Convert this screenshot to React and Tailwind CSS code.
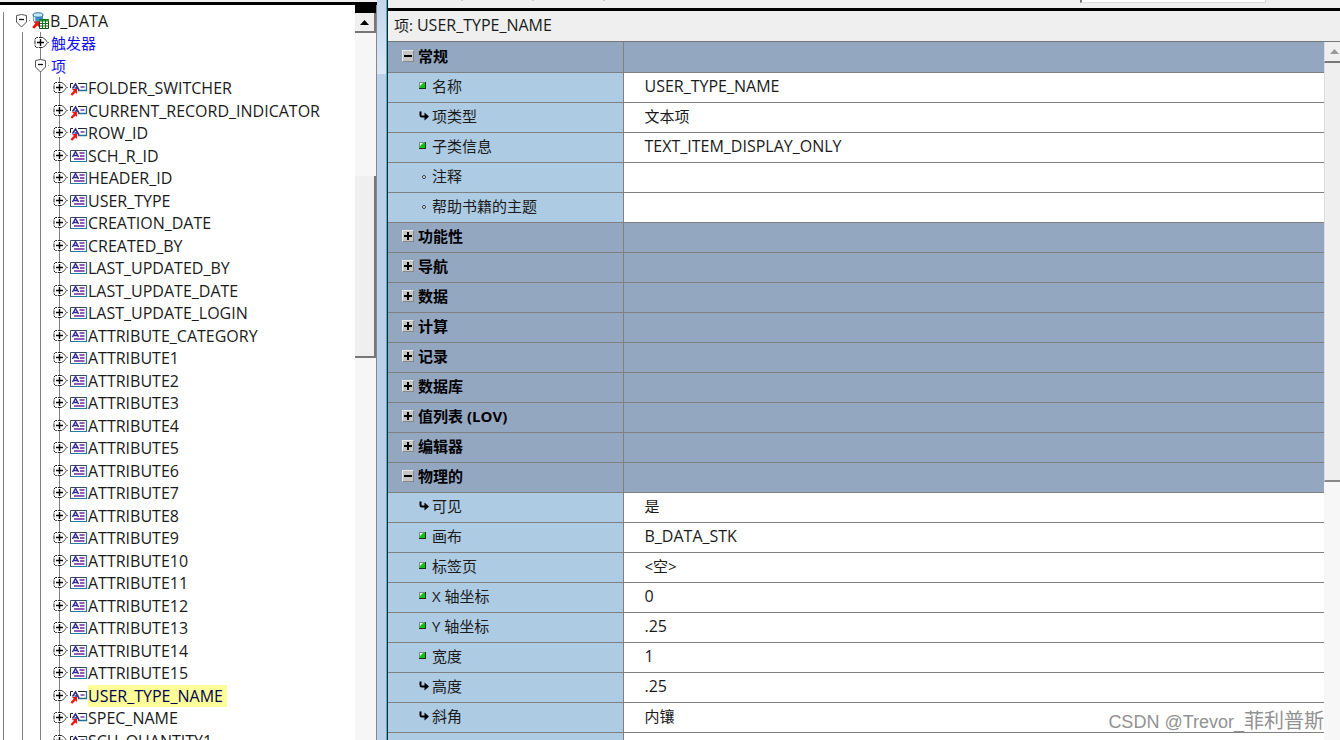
const items = [
  ['FOLDER_SWITCHER', true], ['CURRENT_RECORD_INDICATOR', true], ['ROW_ID', true], ['SCH_R_ID'], ['HEADER_ID'], ['USER_TYPE'],
  ['CREATION_DATE'], ['CREATED_BY'], ['LAST_UPDATED_BY'], ['LAST_UPDATE_DATE'], ['LAST_UPDATE_LOGIN'], ['ATTRIBUTE_CATEGORY'],
  ['ATTRIBUTE1'], ['ATTRIBUTE2'], ['ATTRIBUTE3'], ['ATTRIBUTE4'], ['ATTRIBUTE5'], ['ATTRIBUTE6'], ['ATTRIBUTE7'], ['ATTRIBUTE8'],
  ['ATTRIBUTE9'], ['ATTRIBUTE10'], ['ATTRIBUTE11'], ['ATTRIBUTE12'], ['ATTRIBUTE13'], ['ATTRIBUTE14'], ['ATTRIBUTE15'],
  ['USER_TYPE_NAME', true], ['SPEC_NAME', true], ['SCH_QUANTITY1', true],
];

const properties = [
  { group: '常规', open: true },
  { mark: 'set', name: '名称', value: 'USER_TYPE_NAME' },
  { mark: 'inherit', name: '项类型', value: '文本项' },
  { mark: 'set', name: '子类信息', value: 'TEXT_ITEM_DISPLAY_ONLY' },
  { mark: 'none', name: '注释', value: '' },
  { mark: 'none', name: '帮助书籍的主题', value: '' },
  { group: '功能性' }, { group: '导航' }, { group: '数据' }, { group: '计算' }, { group: '记录' },
  { group: '数据库' }, { group: '值列表 (LOV)' }, { group: '编辑器' },
  { group: '物理的', open: true },
  { mark: 'inherit', name: '可见', value: '是' },
  { mark: 'set', name: '画布', value: 'B_DATA_STK' },
  { mark: 'set', name: '标签页', value: '<空>' },
  { mark: 'set', name: 'X 轴坐标', value: '0' },
  { mark: 'set', name: 'Y 轴坐标', value: '.25' },
  { mark: 'set', name: '宽度', value: '1' },
  { mark: 'inherit', name: '高度', value: '.25' },
  { mark: 'inherit', name: '斜角', value: '内镶' },
  { mark: 'inherit', name: '呈现', value: '是' },
];

const hasCjk = (text) => /[\u4e00-\u9fff]/.test(text);

function Toggle({ open, label, root }) {
  return (
    <button type="button" aria-label={label} aria-expanded={open} className="relative flex h-full w-4 shrink-0 items-center">
      {!root && <span className="absolute inset-y-0 left-1.5 w-px bg-[#808080]" />}
      <svg width="16" height="16" viewBox="0 0 16 16" fill="none" className="relative">
        {open ? (
          <>
            <path d="M1.5 2.5Q6.5 .5 11.5 2.5V9L6.5 14L1.5 9Z" fill="#fff" stroke="#555" />
            <path d="M4 6.5H9" stroke="#111" strokeWidth="1.3" />
            <path d="M14 7.5H15" stroke="#999" />
          </>
        ) : (
          <>
            <path d="M9 2.5H2.5L1 4V11L2.5 12.5H9" fill="#fff" stroke="#222" strokeDasharray="4 1" />
            <path d="M8.5 2.5Q11.5 3.5 13.5 7.5Q11.5 11.5 8.5 12.5" fill="#fff" stroke="#555" />
            <path d="M3 7.5H10M6.5 4V11" stroke="#000" strokeWidth="1.4" />
            <path d="M14 7.5H15" stroke="#777" />
          </>
        )}
      </svg>
    </button>
  );
}

function ItemIcon({ linked }) {
  return (
    <svg width="18" height="18" viewBox="0 0 18 18" fill="none" className="ml-px shrink-0" aria-hidden="true">
      {linked ? (
        <>
          <path d="M.5 9V4.500H3M8 4.500H16" stroke="#222" />
          <path d="M16.500 4V11.500H8" stroke="#226f94" strokeWidth="1.300" />
          <path d="M2.500 9.500L5.500 5L9 11M4.500 9H8" stroke="#302a86" strokeWidth="1.500" />
          <path d="M10.500 8H14.500" stroke="#5b218b" strokeWidth="1.300" />
          <path d="M2 10H7V15L5.500 13.500L2.200 16.800L.6 15.200L3.800 11.800Z" fill="#f80f0f" />
        </>
      ) : (
        <>
          <path d="M.5 15V3.500H16" stroke="#3a4a5a" />
          <path d="M16.500 3V14.500H0" stroke="#2779a5" strokeWidth="1.200" />
          <path d="M2.500 10L5.500 4.500L8.500 10M4 8.500H8" stroke="#302a96" strokeWidth="1.500" />
          <path d="M9.500 6H14.500M10 9H14.500M4 12H14.500" stroke="#6b2a9b" strokeWidth="1.300" />
        </>
      )}
    </svg>
  );
}

function BlockIcon() {
  return (
    <svg width="18" height="18" viewBox="0 0 18 18" className="ml-px shrink-0" aria-hidden="true">
      <path d="M1 3V9Q6 11 11 9V3" fill="#3c8fce" />
      <ellipse cx="6" cy="3" rx="5" ry="2.200" fill="#c8e9fa" stroke="#286fa5" />
      <path d="M2.500 5V9" stroke="#e5f5ff" strokeWidth="1.500" />
      <path d="M7.500 7.500H16.500V16.500H7.500Z" fill="#fff" stroke="#14501e" />
      <path d="M7 8.500H17" stroke="#23942a" strokeWidth="2" />
      <path d="M8 11.500H16M8 14H16M10.500 8V16M13.500 8V16" stroke="#167220" />
      <path d="M1.500 9.500H7V15L5.400 13.400L2 16.800L.2 15L3.400 11.600Z" fill="#f80f0f" />
    </svg>
  );
}

function Mark({ kind }) {
  return (
    <svg width="12" height="12" viewBox="0 0 12 12" fill="none" className="shrink-0" aria-hidden="true">
      {kind === 'set' && (
        <>
          <path d="M1 2H8V9H1Z" fill="#1a2a1a" />
          <path d="M1 2H7V3H2V8H1Z" fill="#7c8c86" />
          <path d="M2 3H7V8H2Z" fill="#10c414" />
          <path d="M2 3H5L2 6Z" fill="#e9fbe6" />
        </>
      )}
      {kind === 'inherit' && (
        <>
          <path d="M2.500 1.500V5Q2.500 6.500 4 6.500H8" stroke="#000" strokeWidth="2" />
          <path d="M6.500 2.500L11 6.500L6.500 10.500Z" fill="#000" />
        </>
      )}
      {kind === 'none' && <circle cx="6" cy="7" r="1.500" fill="#fff" stroke="#334" />}
    </svg>
  );
}

function GroupToggle({ open, label }) {
  return (
    <button type="button" aria-label={label} aria-expanded={!!open} className="flex size-3 shrink-0 items-center justify-center border border-t-[#e8e8e8] border-r-[#888] border-b-[#888] border-l-[#e8e8e8] bg-[#c6c6c6]">
      <svg width="8" height="8" viewBox="0 0 8 8">
        <path d={open ? 'M0 4H8' : 'M0 4H8M4 0V8'} stroke="#000" strokeWidth="2" />
      </svg>
    </button>
  );
}

function Tree() {
  return (
    <div className="flex h-full min-w-0 flex-1 overflow-hidden bg-white pt-[5px] text-base leading-[22px]">
      <div className="mt-0.5 ml-[3px] w-3 shrink-0 border-l border-[#808080]" />
      <ul className="min-w-0 flex-1">
        <li>
          <div className="flex h-[22px] items-center">
            <Toggle open root label="B_DATA" />
            <BlockIcon />
            <span>B_DATA</span>
          </div>
          <ul className="ml-[7px] border-l border-[#808080] pl-[11px]">
            <li className="flex h-[22px] items-center text-[15px] text-[#1010ff]">
              <Toggle open={false} label="触发器" />
              <span className="ml-px">触发器</span>
            </li>
            <li>
              <div className="flex h-[23px] items-center text-[15px] text-[#1010ff]">
                <Toggle open label="项" />
                <span className="ml-px">项</span>
              </div>
              <ul className="ml-1.5 border-l border-[#808080] pl-3">
                {items.map(([name, linked]) => (
                  <li key={name} className="flex h-[22px] items-center even:h-[23px]">
                    <Toggle open={false} label={name} />
                    <ItemIcon linked={linked} />
                    <span className={name === 'USER_TYPE_NAME' ? 'bg-[#ffff99] pr-1 text-[#000050]' : ''}>{name}</span>
                  </li>
                ))}
              </ul>
            </li>
          </ul>
        </li>
      </ul>
    </div>
  );
}

function PropertyTable() {
  return (
    <table className="w-full table-fixed border-collapse">
      <colgroup>
        <col className="w-[235px]" />
        <col />
      </colgroup>
      <tbody>
        {properties.map((p) =>
          p.group ? (
            <tr key={p.group} className="h-[30px] border-b border-[#808080] bg-[#94a7c1]">
              <th scope="rowgroup" className="border-r border-[#808080] p-0 pb-0.5 pl-3.5 text-left font-bold text-black">
                <div className="flex items-center gap-1">
                  <GroupToggle open={p.open} label={p.group} />
                  {p.group}
                </div>
              </th>
              <td className="p-0" />
            </tr>
          ) : (
            <tr key={p.name} className="h-[30px] border-b border-[#808080] bg-white">
              <th scope="row" className="border-r border-[#808080] bg-[#adcbe3] p-0 pb-0.5 pl-[30px] text-left font-normal">
                <div className="flex items-center gap-0.5">
                  <Mark kind={p.mark} />
                  {p.name}
                </div>
              </th>
              <td className={hasCjk(p.value) ? 'p-0 pb-0.5 pl-[21px]' : 'p-0 pb-0.5 pl-[21px] text-base leading-5'}>{p.value}</td>
            </tr>
          ),
        )}
      </tbody>
    </table>
  );
}

export default function App() {
  return (
    <div className="relative flex h-screen overflow-hidden bg-white font-['Open_Sans','Noto_Sans_CJK_SC',sans-serif] text-[15px] leading-5 text-[#1a1a1a]">
      <aside className="flex w-[377px] shrink-0 flex-col">
        <div className="h-[5px] shrink-0 border-b-[3px] border-black bg-[#efefef]" />
        <div className="flex min-h-0 flex-1">
          <Tree />
          <div className="flex w-[22px] shrink-0 flex-col border-r border-[#888] bg-[#f6f6f6]">
            <div className="h-2 shrink-0 bg-black" />
            <button type="button" aria-label="向上滚动" className="flex h-5 shrink-0 items-center justify-center border-r-2 border-b-2 border-[#777] bg-[#efefef]">
              <svg width="9" height="5" viewBox="0 0 9 5"><path d="M4.500 0L9 5H0Z" /></svg>
            </button>
            <div className="h-[143px] shrink-0" />
            <div className="h-[182px] shrink-0 border-r-2 border-b-2 border-[#777] bg-[#efefef]" />
          </div>
        </div>
      </aside>
      <div className="flex w-2.5 shrink-0 flex-col border-r border-[#3fb4cc] bg-[#b9d1ea]">
        <div className="h-[74px] bg-gradient-to-b from-[#c3d6ec] to-[#dbe8f6]" />
      </div>
      <main className="flex min-w-0 flex-1 flex-col border-l border-[#222]">
        <div className="flex h-[11px] shrink-0 justify-between border-b-[3px] border-black bg-[#efefef] pr-[74px] pl-[73px]">
          <div className="flex h-px gap-[69px]">
            <span className="w-0.5 bg-[#ccc]" />
            <span className="w-0.5 bg-[#ccc]" />
            <span className="w-0.5 bg-[#ccc]" />
          </div>
          <div className="h-[3px] w-[186px] border-r border-b border-l-2 border-[#ddd] border-l-[#777] bg-white" />
        </div>
        <h1 className="flex h-[31px] shrink-0 items-center gap-1 border-b border-[#777] bg-[#efefef] pb-0.5 pl-1.5">
          <span>项:</span>
          <span className="text-base leading-5">USER_TYPE_NAME</span>
        </h1>
        <div className="flex min-h-0 flex-1">
          <div className="min-w-0 flex-1 overflow-hidden">
            <PropertyTable />
          </div>
          <div className="flex w-4 shrink-0 flex-col bg-[#f7f7f7]">
            <button type="button" aria-label="向上滚动" className="flex h-[21px] shrink-0 items-center justify-center border-b-2 border-l border-b-[#777] border-l-[#ddd] bg-[#efefef] pl-1">
              <svg width="9" height="5" viewBox="0 0 9 5"><path d="M4.500 0L9 5H0Z" fill="#999" /></svg>
            </button>
            <div className="h-[419px] shrink-0 border-b-2 border-l border-b-[#888] border-l-[#ddd] bg-[#efefef]" />
          </div>
        </div>
      </main>
      <div className="absolute right-4 bottom-1 font-['Liberation_Sans','Noto_Sans_CJK_SC',sans-serif] text-lg leading-7 text-[#929292]">
        CSDN @Trevor_<span className="text-xl leading-7">菲利普斯</span>
      </div>
    </div>
  );
}
